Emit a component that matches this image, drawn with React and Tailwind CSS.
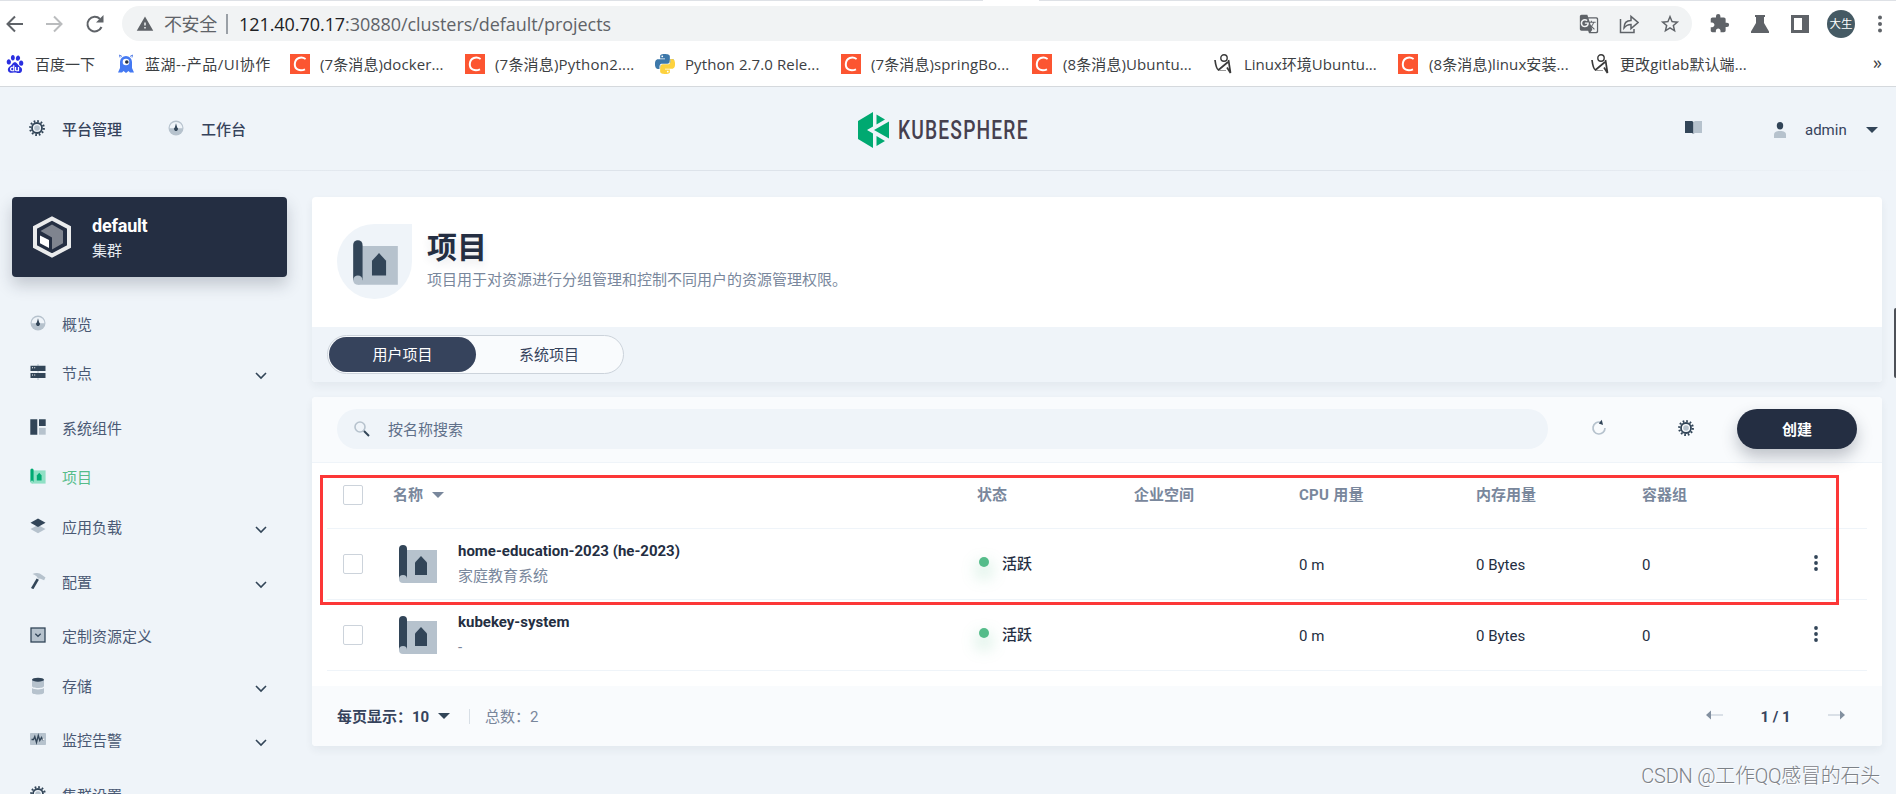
import React from 'react';
import { MdExtension, MdOutlineStarBorder, MdWarning, MdGTranslate } from 'react-icons/md';
import { SiPython, SiBaidu } from 'react-icons/si';

const DARK = '#324558';
const LIGHT = '#b6c2cd';

const GearIcon = ({ size = 16 }) => (
  <svg width={size} height={size} viewBox="0 0 16 16">
    <circle cx="8" cy="8" r="6.8" fill="none" stroke={DARK} strokeWidth="2.2" strokeDasharray="1.7 1.86" />
    <circle cx="8" cy="8" r="5" fill="none" stroke={DARK} strokeWidth="1.8" />
    <circle cx="8" cy="8" r="2.8" fill={LIGHT} />
  </svg>
);

const GaugeIcon = () => (
  <svg width="16" height="16" viewBox="0 0 16 16">
    <circle cx="8" cy="8" r="7.5" fill={LIGHT} />
    <path d="M1.6 8.3a6.4 6.4 0 0 1 12.8 0z" fill="#eff4f9" />
    <path d="M8 3.2l1.1 4a2 2 0 1 1-2.2 0z" fill={DARK} />
  </svg>
);

const NodesIcon = () => (
  <svg width="16" height="16" viewBox="0 0 16 16">
    <path d="M7.5 0h1v16h-1z" fill={LIGHT} />
    <path d="M.5 1.8h15v5.1H.5zM.5 9h15v5.1H.5z" fill={DARK} />
    <path d="M2 3.2h1v1H2zM4.2 3.2h1v1h-1zM2 10.4h1v1H2zM4.2 10.4h1v1h-1z" fill="#fff" />
  </svg>
);

const ComponentsIcon = () => (
  <svg width="16" height="16" viewBox="0 0 16 16">
    <path d="M.3.3h7v15.4h-7zM9 .3h6.7v6.7H9z" fill={DARK} />
    <path d="M9 8.9h6.7v6.8H9z" fill={LIGHT} />
  </svg>
);

const ProjectIcon = ({ size = 40, dark = DARK, light = LIGHT }) => (
  <svg width={size} height={size} viewBox="0 0 40 40">
    <path d="M5 6h34v33H5z" fill={light} />
    <path d="M1 5a4 4 0 0 1 8 0v30H1z" fill={dark} />
    <circle cx="5" cy="35" r="4" fill={light} />
    <path d="M17 31V18.5L23 12l6 6.5V31z" fill={dark} />
  </svg>
);

const LayersIcon = () => (
  <svg width="16" height="16" viewBox="0 0 16 16">
    <path d="M8 7l7.5 4L8 15.2.5 11z" fill={LIGHT} />
    <path d="M8 .5l7.5 4.2L8 9 .5 4.7z" fill={DARK} />
  </svg>
);

const HammerIcon = () => (
  <svg width="16" height="16" viewBox="0 0 16 16">
    <path d="M2.5 1C6-.6 9.5-.3 12 2l3.5 2.4-1.4 2.9-3.6-1.600-2.600-.3C7 3 5 2 2.500 1z" fill={LIGHT} />
    <path d="M6.600 5.400l2.300 1.300L3.400 16.200 1 15z" fill={DARK} />
  </svg>
);

const CrdIcon = () => (
  <svg width="16" height="16" viewBox="0 0 16 16">
    <rect x="1" y="1" width="14" height="14" fill={LIGHT} stroke={DARK} strokeWidth="1.3" />
    <path d="M5.3 6.7L8 9.3l2.7-2.6" fill="none" stroke={DARK} strokeWidth="1.3" />
  </svg>
);

const StorageIcon = () => (
  <svg width="16" height="18" viewBox="0 0 16 18">
    <path d="M2 3v6c0 1.2 2.7 2 6 2s6-.8 6-2V3zM2 11v4.5c0 1.2 2.7 2 6 2s6-.8 6-2V11c-1 1-3.5 1.4-6 1.4S3 12 2 11z" fill={LIGHT} />
    <ellipse cx="8" cy="2.7" rx="6" ry="2" fill={DARK} />
  </svg>
);

const MonitorIcon = () => (
  <svg width="16" height="16" viewBox="0 0 16 16">
    <rect x="0" y="2" width="16" height="12" rx=".8" fill={LIGHT} />
    <path d="M1.5 8.5h2l1.3-3L6.5 11.5 8.3 4.5l1.5 5L11.5 6.5l1 2h1" fill="none" stroke={DARK} strokeWidth="1.3" />
    <path d="M12.6 7.6h1.6v1.3h-1.6z" fill="#fff" />
  </svg>
);

const CaretDown = ({ color = DARK }) => (
  <svg width="12" height="6" viewBox="0 0 12 6">
    <path d="M0 0h12L6 6z" fill={color} />
  </svg>
);

const MoreIcon = () => (
  <svg className="mb-0.5" width="4" height="16" viewBox="0 0 4 16" fill={DARK}>
    <circle cx="2" cy="2" r="1.9" />
    <circle cx="2" cy="8" r="1.9" />
    <circle cx="2" cy="14" r="1.9" />
  </svg>
);

const CsdnIcon = () => (
  <svg width="20" height="20" viewBox="0 0 20 20">
    <path d="M0 0h20v20H0z" fill="#fc5531" />
    <path d="M15.600 5C11.500 2.300 5.300 3.500 4.800 10c-.2 6 5.400 7.400 10.200 5.300" fill="none" stroke="#fff" strokeWidth="2" />
  </svg>
);

const BlueLakeIcon = () => (
  <svg width="18" height="20" viewBox="0 0 18 20">
    <path d="M3 3.5L2.500 1l2.500 1.500M15 3.500L15.500 1l-2.500 1.500" fill="none" stroke="#5c84e8" />
    <path d="M3 8a6 6 0 0 1 12 0v6l2 4.500h-4L11.500 17 9 19l-2.500-2L5 18.500H1L3 14z" fill="#4479f2" />
    <circle cx="9" cy="8" r="3.300" fill="#fff" />
    <circle cx="9.800" cy="8" r="1.800" fill="#27303f" />
  </svg>
);

const FigureIcon = () => (
  <svg width="18" height="20" viewBox="0 0 18 20" fill="none" stroke="#3a3a3a">
    <circle cx="10" cy="4" r="3.2" strokeWidth="1.4" />
    <path d="M1 6c.5 4 1.500 9 3.500 10L14 8" strokeWidth="1.700" />
    <path d="M14.500 6l2 13L13 13.500" strokeWidth="1.700" />
    <path d="M5 16.500h7" stroke="#999" />
  </svg>
);

const PythonIcon = () => (
  <span className="relative block h-5 w-5">
    <SiPython size={20} className="block text-[#3d78aa] [clip-path:polygon(0_0,100%_0,100%_30%,68%_50%,30%_50%,24%_76%,0_76%)]" />
    <SiPython size={20} className="absolute top-0 left-0 text-[#fdd23e] [clip-path:polygon(100%_24%,76%_24%,70%_50%,32%_50%,24%_70%,24%_100%,100%_100%)]" />
  </span>
);

const bookmarks = [
  { icon: <SiBaidu size={18} color="#2a2fe0" />, label: '百度一下', slot: 'w-[117px] pl-[6px]', iconBox: 'w-[29px]' },
  { icon: <BlueLakeIcon />, label: '蓝湖--产品/UI协作', slot: 'w-[173px] tracking-[0.5px]', iconBox: 'w-[28px]' },
  { icon: <CsdnIcon />, label: '(7条消息)docker...', slot: 'w-[175px] tracking-[0.1px]', iconBox: 'w-[30px]' },
  { icon: <CsdnIcon />, label: '(7条消息)Python2....', slot: 'w-[190px] tracking-[0.2px]', iconBox: 'w-[30px]' },
  { icon: <PythonIcon />, label: 'Python 2.7.0 Rele...', slot: 'w-[186px] tracking-[0.1px]', iconBox: 'w-[30px]' },
  { icon: <CsdnIcon />, label: '(7条消息)springBo...', slot: 'w-[191px] tracking-[0.1px]', iconBox: 'w-[30px]' },
  { icon: <CsdnIcon />, label: '(8条消息)Ubuntu...', slot: 'w-[182px] tracking-[0.1px]', iconBox: 'w-[31px]' },
  { icon: <FigureIcon />, label: 'Linux环境Ubuntu...', slot: 'w-[184px]', iconBox: 'w-[30px]' },
  { icon: <CsdnIcon />, label: '(8条消息)linux安装...', slot: 'w-[193px] tracking-[0.1px]', iconBox: 'w-[31px]' },
  { icon: <FigureIcon />, label: '更改gitlab默认端...', slot: 'w-[282px] tracking-[0.1px]', iconBox: 'w-[29px]' },
];

const menu = [
  { label: '概览', icon: <GaugeIcon />, row: 'h-[49px]' },
  { label: '节点', icon: <NodesIcon />, row: 'h-[55px]', more: true },
  { label: '系统组件', icon: <ComponentsIcon />, row: 'h-[49px]' },
  { label: '项目', icon: <ProjectIcon size={16} dark="#00aa72" light="#90e0c5" />, row: 'h-[50px]', active: true },
  { label: '应用负载', icon: <LayersIcon />, row: 'h-[55px]', more: true },
  { label: '配置', icon: <HammerIcon />, row: 'h-[54px]', more: true },
  { label: '定制资源定义', icon: <CrdIcon />, row: 'h-[50px]' },
  { label: '存储', icon: <StorageIcon />, row: 'h-[54px]', more: true },
  { label: '监控告警', icon: <MonitorIcon />, row: 'h-[55px]', more: true },
  { label: '集群设置', icon: <GearIcon />, row: 'h-[50px]' },
];

const projects = [
  { name: 'home-education-2023 (he-2023)', desc: '家庭教育系统', status: '活跃', cpu: '0 m', memory: '0 Bytes', pods: '0' },
  { name: 'kubekey-system', desc: '-', status: '活跃', cpu: '0 m', memory: '0 Bytes', pods: '0' },
];

const BrowserBar = () => (
  <div className="h-[87px] border-b border-[#d5d9dd] bg-white font-['Open_Sans','Noto_Sans_CJK_SC',sans-serif] text-[#3c4043]">
    <div className="flex h-px">
      <div className="w-[983px] bg-[#dee1e6]" />
      <div className="w-[56px]" />
      <div className="flex-1 bg-[#dee1e6]" />
    </div>
    <div className="flex h-[45px] items-center">
      <svg className="ml-[6px]" width="98" height="20" viewBox="0 0 98 20" fill="none" strokeWidth="2">
        <path d="M17 10H2M9 2.5L1.5 10 9 17.5" stroke="#5f6368" />
        <path d="M40 10h15M48 2.5L55.5 10 48 17.5" stroke="#babcbe" />
        <path d="M95.5 13a7.3 7.3 0 1 1-1.5-8" stroke="#5f6368" />
        <path d="M97.5 1v7.5H90z" fill="#5f6368" />
      </svg>
      <div className="ml-[18px] flex h-[35px] w-[1570px] items-center rounded-full bg-[#f1f3f4]">
        <MdWarning size={18} className="ml-[14px] text-[#5f6368]" />
        <span className="ml-[10px] w-[62px] text-lg leading-6 tracking-[-0.4px] text-[#5f6368]">不安全</span>
        <span className="h-5 w-0.5 bg-[#9aa0a6]" />
        <span className="ml-[11px] flex-1 text-lg leading-6 tracking-[-0.06px] text-[#5f6368]">
          <span className="text-[#202124]">121.40.70.17</span>:30880/clusters/default/projects
        </span>
        <div className="flex w-[102px] items-center justify-between text-[#5f6368]">
          <MdGTranslate size={20} />
          <svg width="20" height="20" viewBox="0 0 20 20" fill="none" stroke="currentColor" strokeWidth="1.5">
            <path d="M1.5 5v13.5H15V15" />
            <path d="M5 14c0-5 3-7.5 7-7.5V2.5L19 8.5l-7 6v-4c-3 0-5 .8-7 3.5z" />
          </svg>
          <MdOutlineStarBorder size={22} />
        </div>
        <span className="w-[11px]" />
      </div>
      <div className="flex items-center text-[#5f6368]">
        <MdExtension size={21} className="ml-[17px]" />
        <svg className="ml-[21px]" width="18" height="18" viewBox="0 0 18 18">
          <path d="M4 0h10v2h-1v6l5 8.500V18H0v-1.500L5 8V2H4z" fill="currentColor" />
        </svg>
        <svg className="ml-[22px]" width="18" height="18" viewBox="0 0 18 18">
          <path d="M0 0h18v18H0zM3 3v12h8V3z" fill="currentColor" fillRule="evenodd" />
        </svg>
        <span className="ml-[18px] flex h-7 w-7 items-center justify-center rounded-full bg-[#455a64] text-[11.5px] text-white">大生</span>
        <span className="ml-[23px]">
          <svg width="4" height="18" viewBox="0 0 4 18" fill="#5f6368">
            <circle cx="2" cy="2.5" r="2" />
            <circle cx="2" cy="9" r="2" />
            <circle cx="2" cy="15.5" r="2" />
          </svg>
        </span>
      </div>
    </div>
    <div className="flex h-9 items-center text-[15px]">
      {bookmarks.map((item, i) => (
        <div key={i} className={`flex shrink-0 items-center whitespace-nowrap ${item.slot}`}>
          <span className={`shrink-0 ${item.iconBox}`}>{item.icon}</span>
          <span className="leading-5">{item.label}</span>
        </div>
      ))}
      <span className="pb-1 text-lg">»</span>
    </div>
  </div>
);

const Header = () => (
  <header>
    <div className="flex h-[83px] items-center text-[15px] font-medium text-[#36435c]">
      <div className="flex w-[858px] items-center">
        <span className="ml-[29px] mb-0.5"><GearIcon /></span>
        <span className="ml-[17px] w-[106px] pt-1">平台管理</span>
        <span className="mb-0.5"><GaugeIcon /></span>
        <span className="ml-[17px] pt-1">工作台</span>
      </div>
      <svg className="mt-[3px]" width="190" height="40" viewBox="0 -2 190 40">
        <path d="M0 9L15 0v14.5L9 18l6 3.5V36L0 27z" fill="#00a971" />
        <path d="M18.5 2.5L27 7.500l-8.500 5zM31 9.500v17L16 18zM18.500 24l8.500 5-8.500 5z" fill="#00a971" />
        <g transform="translate(40 27) scale(.74 1)">
          <text fontSize="26" fontFamily="Roboto" fontWeight="500" fill="#46404f" textLength="175" lengthAdjust="spacing">KUBESPHERE</text>
        </g>
      </svg>
      <svg className="mb-1 ml-[637px]" width="17" height="14" viewBox="0 0 17 14">
        <path d="M0 1h7l1.5 1v12L7 13H0z" fill={DARK} />
        <path d="M17 1h-7L8.500 2v12l1.500-1h7z" fill={LIGHT} />
      </svg>
      <svg className="mt-0.5 ml-[72px]" width="12" height="16" viewBox="0 0 12 16">
        <ellipse cx="6" cy="3.7" rx="3.2" ry="3.7" fill={DARK} />
        <path d="M0 16v-3c0-3 2-4 6-4s6 1 6 4v3z" fill={LIGHT} />
      </svg>
      <span className="ml-[19px] w-[61px] pt-1 font-normal">admin</span>
      <span className="pt-0.5"><CaretDown /></span>
    </div>
    <div className="h-px bg-[linear-gradient(to_right,transparent,#dde3ea_25%,#dde3ea_75%,transparent)]" />
  </header>
);

const Sidebar = () => (
  <aside className="ml-3 w-[275px] shrink-0">
    <div className="flex h-20 items-center rounded bg-[#242e42] shadow-[0_8px_16px_0_rgba(35,45,65,0.22)]">
      <svg className="ml-[20px]" width="40" height="42" viewBox="0 0 40 42">
        <path d="M20 2.5l17 9v19l-17 9-17-9v-19z" fill="none" stroke="#eaebec" strokeWidth="4" />
        <path d="M20 8.500l11 6.200v12.600L20 33.500V21.500L8.500 15z" fill="#7f848f" />
        <path d="M8 19.500l9 4.500v8l-9-4.800z" fill="#fff" />
      </svg>
      <div className="ml-5 text-white">
        <div className="mt-0.5 text-lg leading-6 font-bold tracking-[-0.2px]">default</div>
        <div className="mt-px text-[15px] leading-6 text-[#e3e9ef]">集群</div>
      </div>
    </div>
    <nav className="mt-[22px]">
      {menu.map((item) => (
        <div key={item.label} className={`flex items-start pt-[13px] text-[15px] leading-6 ${item.row}`}>
          <span className="mt-[3px] ml-[18px] w-8">{item.icon}</span>
          <span className={item.active ? 'mt-px w-[193px] text-[#55bc8a]' : 'mt-px w-[193px] text-[#4a5974]'}>{item.label}</span>
          {item.more && (
            <svg className="mt-[11px]" width="12" height="8" viewBox="0 0 12 8">
              <path d="M1 1l5 5 5-5" fill="none" stroke={DARK} strokeWidth="1.6" />
            </svg>
          )}
        </div>
      ))}
    </nav>
  </aside>
);

const Banner = () => (
  <section className="rounded bg-white shadow-[0_4px_8px_0_rgba(36,46,66,0.06)]">
    <div className="flex h-[130px] pt-[27px] pl-[25px]">
      <div className="flex h-[75px] w-[75px] items-center justify-center rounded-full rounded-tr-none bg-[#eff4f9] pt-0.5 pl-px">
        <ProjectIcon size={47} />
      </div>
      <div className="ml-[15px]">
        <h1 className="mt-[4px] text-[30px] leading-10 font-bold text-[#242e42] [text-shadow:0_4px_8px_rgba(36,46,66,0.1)]">项目</h1>
        <p className="text-[15px] leading-6 text-[#79879c]">项目用于对资源进行分组管理和控制不同用户的资源管理权限。</p>
      </div>
    </div>
    <div className="h-[55px] rounded-b bg-[#eff4f9] pt-2 pl-[15px] text-[15px]">
      <div className="flex h-[39px] w-[297px] items-center rounded-full border border-[#ccd3db] bg-[#f9fbfd] p-px">
        <span className="flex h-[35px] w-[147px] items-center justify-center rounded-full bg-[#36435c] pt-px text-white">用户项目</span>
        <span className="flex flex-1 items-center justify-center pt-px text-[#36435c]">系统项目</span>
      </div>
    </div>
  </section>
);

const Checkbox = () => <span className="block h-5 w-5 rounded-xs border border-[#ccd3db] bg-white" />;

const columns = 'grid grid-cols-[66px_584px_157px_165px_177px_166px_225px]';

const ProjectTable = () => (
  <section className="relative mt-[15px] rounded bg-white shadow-[0_4px_8px_0_rgba(36,46,66,0.06)]">
    <div className="flex h-[66px] items-start rounded-t border-b border-[#eff4f9] bg-[#f9fbfd] pt-3 pl-[25px]">
      <div className="flex h-10 w-[1211px] items-center rounded-full bg-[#eff4f9] text-[15px] text-[#5f708a]">
        <svg className="ml-[17px]" width="16" height="16" viewBox="0 0 16 16" fill="none">
          <circle cx="6" cy="6" r="5" stroke={LIGHT} strokeWidth="1.6" />
          <path d="M10 10l5 5" stroke={DARK} strokeWidth="1.9" />
        </svg>
        <span className="ml-[18px] pt-0.5">按名称搜索</span>
      </div>
      <svg className="mt-2.5 ml-[43px]" width="16" height="17" viewBox="0 0 16 17">
        <path d="M9.5 3.2A6 6 0 1 0 14 9" fill="none" stroke={LIGHT} strokeWidth="1.7" />
        <path d="M10 1l3 4.5H8.5z" fill={DARK} transform="rotate(20 11 3)" />
      </svg>
      <span className="mt-[11px] ml-[71px]"><GearIcon /></span>
      <button className="ml-[43px] h-10 w-[120px] rounded-full bg-[#242e42] pt-0.5 text-[15px] font-bold text-white shadow-[0_8px_16px_0_rgba(35,45,65,0.28)]">创建</button>
    </div>

    <div className="mx-[15px] pb-[15px]">
      <div className={`h-[66px] items-start border-b border-[#eff4f9] pt-5 text-[15px] leading-6 font-bold text-[#79879c] ${columns}`}>
        <span className="pt-0.5 pl-4"><Checkbox /></span>
        <span className="flex items-center gap-[9px]">名称 <CaretDown color="#79879c" /></span>
        <span>状态</span>
        <span>企业空间</span>
        <span className="tracking-[0.3px]">CPU 用量</span>
        <span>内存用量</span>
        <span>容器组</span>
      </div>
      {projects.map((project) => (
        <div key={project.name} className={`h-[71px] items-center border-b border-[#eff4f9] text-[15px] text-[#242e42] ${columns}`}>
          <span className="pl-4"><Checkbox /></span>
          <div className="flex items-center pl-[5px]">
            <ProjectIcon size={40} />
            <div className="ml-5">
              <div className="leading-6 font-bold">{project.name}</div>
              <div className="leading-[26px] text-[#79879c]">{project.desc}</div>
            </div>
          </div>
          <div className="flex items-center pl-0.5 font-medium">
            <span className="mr-[13px] mb-1 h-2.5 w-2.5 rounded-full bg-[#55bc8a] shadow-[0_8px_16px_2px_rgba(85,188,138,0.35)]" />
            {project.status}
          </div>
          <span />
          <span className="pt-0.5">{project.cpu}</span>
          <span className="pt-0.5">{project.memory}</span>
          <div className="flex items-center">
            <span className="w-[172px] pt-0.5">{project.pods}</span>
            <MoreIcon />
          </div>
        </div>
      ))}
    </div>

    <div className="flex h-[60px] items-center rounded-b bg-[#f9fbfd] pl-[25px] text-[15px] font-bold text-[#36435c]">
      <span className="w-[75px] pt-0.5 whitespace-nowrap">每页显示：</span>
      <span className="w-[26px] pt-0.5">10</span>
      <CaretDown />
      <span className="mr-[15px] ml-[19px] h-[15px] w-px bg-[#d8dfe6]" />
      <span className="w-[45px] pt-0.5 font-normal whitespace-nowrap text-[#79879c]">总数：</span>
      <span className="flex-1 pt-0.5 font-normal text-[#79879c]">2</span>
      <svg className="mb-[3px]" width="17" height="10" viewBox="0 0 17 10">
        <path d="M4 4.2h13v1.6H4z" fill="#d3dae1" />
        <path d="M0 5l5-4.5v9z" fill="#8390a0" />
      </svg>
      <span className="w-[105px] pt-0.5 text-center">1 / 1</span>
      <svg className="mr-[37px] mb-[3px]" width="17" height="10" viewBox="0 0 17 10">
        <path d="M0 4.2h13v1.6H0z" fill="#d3dae1" />
        <path d="M17 5l-5-4.5v9z" fill="#8390a0" />
      </svg>
    </div>

    {/* highlight around the new project */}
    <div className="absolute top-[78px] left-2 h-[130px] w-[1519px] border-3 border-[#fc3737]" />
  </section>
);

const App = () => {
  return (
    <div className="relative h-[794px] w-[1896px] overflow-hidden bg-[#eff4f9] font-[Roboto,'Noto_Sans_CJK_SC',sans-serif]">
      <BrowserBar />
      <Header />
      <div className="flex pt-[26px]">
        <Sidebar />
        <main className="ml-[25px] w-[1570px]">
          <Banner />
          <ProjectTable />
        </main>
      </div>
      <div className="absolute top-[308px] right-0 h-[70px] w-0.5 rounded-l bg-[#4d5158]" />
      <div className="absolute right-4 bottom-1 text-xl leading-7 font-light tracking-[-0.25px] whitespace-nowrap text-[#7c8187] [text-shadow:1px_1px_0_#fff]">CSDN @工作QQ感冒的石头</div>
    </div>
  );
};

export default App;
